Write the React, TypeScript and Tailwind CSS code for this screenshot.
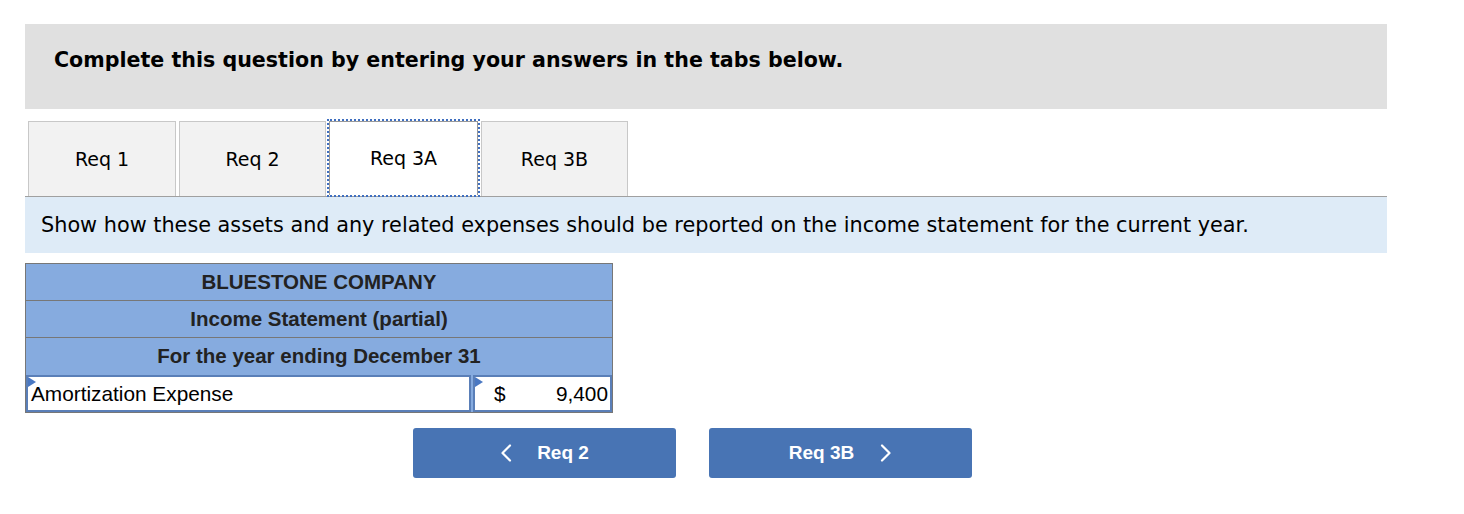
const tabs = ['Req 1', 'Req 2', 'Req 3A', 'Req 3B']

function Tab({ label, active }: { label: string; active?: boolean }) {
  if (active) {
    return (
      <div className="border-2 border-dotted border-[#3f6fc0] -mt-[2px] -mb-px -mx-[2px] z-10">
        <div className="w-[149px] h-[74px] bg-white border border-[#999] border-b-0 flex items-center justify-center text-[19px] text-black">
          {label}
        </div>
      </div>
    )
  }
  return (
    <div className="w-[147px] h-[75px] bg-[#f2f2f2] border border-[#c8c8c8] border-b-0 flex items-center justify-center text-[19px] text-black">
      {label}
    </div>
  )
}

function Corner() {
  return (
    <svg className="absolute left-0 top-0" width="8" height="10" viewBox="0 0 8 10">
      <polygon points="0,0 8,5 0,10" fill="#4a78c2" />
    </svg>
  )
}

function Chevron({ dir }: { dir: 'left' | 'right' }) {
  return (
    <svg width="12" height="18" viewBox="0 0 12 18" fill="none" stroke="white" strokeWidth="2.2" strokeLinecap="round" strokeLinejoin="round">
      {dir === 'left' ? <polyline points="10,1.5 2.5,9 10,16.5" /> : <polyline points="2,1.5 9.5,9 2,16.5" />}
    </svg>
  )
}

export default function App() {
  return (
    <div className="w-[1464px] h-[514px] bg-white pt-6 pl-[25px]" style={{ fontFamily: '"DejaVu Sans", Verdana, sans-serif' }}>
      <div className="w-[1362px] h-[85px] bg-[#e0e0e0] pt-[24px] pl-[29px]">
        <h2 className="text-[20.6px] leading-[24px] font-bold text-black">
          Complete this question by entering your answers in the tabs below.
        </h2>
      </div>

      <div className="mt-3 w-[1362px] flex items-end gap-[3px] pl-[3px] border-b border-[#a0a0a0] h-[76px]">
        <div className="w-[148px] h-[75px] bg-[#f2f2f2] border border-[#c8c8c8] border-b-0 flex items-center justify-center text-[19px] text-black">
          {tabs[0]}
        </div>
        {tabs.slice(1).map((t) => (
          <Tab key={t} label={t} active={t === 'Req 3A'} />
        ))}
      </div>

      <div className="w-[1362px] h-[56px] bg-[#deebf7] flex items-center pl-4 pt-[2px]">
        <p className="text-[20.8px] text-black">
          Show how these assets and any related expenses should be reported on the income statement for the current year.
        </p>
      </div>

      <div className="mt-[10px] w-[588px] border border-[#777] text-[#222]" style={{ fontFamily: '"Liberation Sans", Arial, sans-serif' }}>
        <div className="h-[37px] bg-[#86abdf] border-b border-[#777] flex items-center justify-center font-bold text-[20.5px]">
          BLUESTONE COMPANY
        </div>
        <div className="h-[37px] bg-[#86abdf] border-b border-[#777] flex items-center justify-center font-bold text-[20.5px]">
          Income Statement (partial)
        </div>
        <div className="h-[37px] bg-[#86abdf] flex items-center justify-center font-bold text-[20.5px]">
          For the year ending December 31
        </div>
        <div className="flex h-[37px] bg-[#86abdf]">
          <div className="relative w-[445px] bg-white border-2 border-[#5a7fb8] flex items-center pl-[3px] text-[20.8px] text-black">
            <Corner />
            Amortization Expense
          </div>
          <div className="relative flex-1 ml-[2px] bg-white border-2 border-[#5a7fb8] flex items-center justify-between pl-[19px] pr-[2px] text-[20.8px] text-black">
            <Corner />
            <span>$</span>
            <span>9,400</span>
          </div>
        </div>
      </div>

      <div className="mt-[15px] flex gap-[33px] pl-[388px]" style={{ fontFamily: '"Liberation Sans", Arial, sans-serif' }}>
        <button className="w-[263px] h-[50px] rounded-[3px] bg-[#4874b4] text-white font-bold text-[19px] flex items-center justify-center gap-[25px]">
          <Chevron dir="left" />
          <span>Req 2</span>
        </button>
        <button className="w-[263px] h-[50px] rounded-[3px] bg-[#4874b4] text-white font-bold text-[19px] flex items-center justify-center gap-[26px]">
          <span>Req 3B</span>
          <Chevron dir="right" />
        </button>
      </div>
    </div>
  )
}
